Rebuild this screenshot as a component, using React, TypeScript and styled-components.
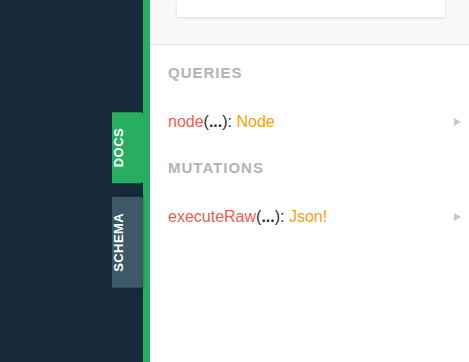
import styled, { createGlobalStyle } from "styled-components";

const GlobalStyle = createGlobalStyle`
    html, body {
        margin: 0;
        padding: 0;
        height: 100%;
        overflow: hidden;
    }
    body {
        font-family: "Liberation Sans", Arial, sans-serif;
        -webkit-font-smoothing: antialiased;
    }
    #root {
        height: 100%;
    }
`;

const Layout = styled.div`
    display: flex;
    height: 100vh;
`;

const Sidebar = styled.div`
    width: 143px;
    flex-shrink: 0;
    background: #172a3a;
    display: flex;
    flex-direction: column;
    align-items: flex-end;
    padding-top: 112px;
    gap: 14px;
    box-sizing: border-box;
`;

const Tab = styled.div<{ $active?: boolean }>`
    width: 31px;
    padding: 16px 0;
    box-sizing: border-box;
    display: flex;
    justify-content: center;
    background: ${(p) => (p.$active ? "#27ae60" : "#3d5866")};
    border-radius: 2px 0 0 2px;
    box-shadow: ${(p) => (p.$active ? "none" : "-1px 1px 2px rgba(0, 0, 0, 0.2)")};
    color: #fff;
    font-size: 13px;
    font-weight: 700;
    letter-spacing: 0.4px;
    line-height: 14px;
    writing-mode: vertical-rl;
    transform: rotate(180deg);
    cursor: pointer;
`;

const GreenBar = styled.div`
    width: 7px;
    flex-shrink: 0;
    background: #27ae60;
`;

const Panel = styled.div`
    flex: 1;
    background: #fff;
    display: flex;
    flex-direction: column;
    min-width: 0;
`;

const SearchArea = styled.div`
    height: 44px;
    background: #f9f9f9;
    border-bottom: 1px solid #e0e0e0;
    padding: 0 24px 0 27px;
`;

const SearchBox = styled.div`
    height: 17px;
    background: #fff;
    box-shadow: 0 1px 3px rgba(0, 0, 0, 0.12);
`;

const Section = styled.div`
    padding-top: 18px;
    & + & {
        padding-top: 26px;
    }
`;

const SectionTitle = styled.div`
    padding-left: 18px;
    font-size: 15px;
    line-height: 20px;
    font-weight: 700;
    letter-spacing: 1px;
    color: #b3b3b3;
`;

const Item = styled.div`
    display: flex;
    align-items: center;
    justify-content: space-between;
    padding: 29px 8px 0 18px;
    font-size: 16px;
    line-height: 20px;
    color: #2b2b2b;
`;

const FieldName = styled.span`
    color: #f25c54;
`;

const Dots = styled.span`
    font-weight: 700;
`;

const TypeName = styled.span`
    color: #f5a00f;
`;

const Arrow = () => (
    <svg width="7" height="8" viewBox="0 0 7 8">
        <polygon points="0,0 7,4 0,8" fill="#c8c8c8" />
    </svg>
);

const sections = [
    { title: "Queries", fields: [{ name: "node", type: "Node" }] },
    { title: "Mutations", fields: [{ name: "executeRaw", type: "Json!" }] },
];

export default function App() {
    return (
        <>
            <GlobalStyle />
            <Layout>
                <Sidebar>
                    <Tab $active>DOCS</Tab>
                    <Tab>SCHEMA</Tab>
                </Sidebar>
                <GreenBar />
                <Panel>
                    <SearchArea>
                        <SearchBox />
                    </SearchArea>
                    {sections.map((s) => (
                        <Section key={s.title}>
                            <SectionTitle>{s.title.toUpperCase()}</SectionTitle>
                            {s.fields.map((f) => (
                                <Item key={f.name}>
                                    <span>
                                        <FieldName>{f.name}</FieldName>(<Dots>...</Dots>):{" "}
                                        <TypeName>{f.type}</TypeName>
                                    </span>
                                    <Arrow />
                                </Item>
                            ))}
                        </Section>
                    ))}
                </Panel>
            </Layout>
        </>
    );
}
